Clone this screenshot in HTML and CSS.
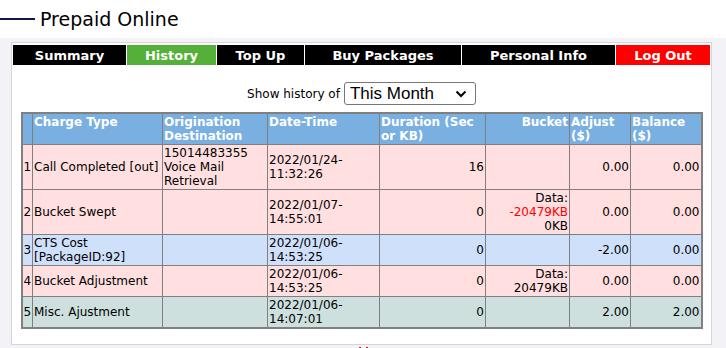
FILE: index.html
```html
<!DOCTYPE html>
<html>
<head>
<meta charset="utf-8">
<link rel="stylesheet" href="styles.css">
</head>
<body>
<header class="top">
  <span class="top-line"></span>
  <h1 class="title">Prepaid Online</h1>
</header>
<main class="panel">
  <nav class="tabs">
    <a class="tab">Summary</a>
    <a class="tab tab-active">History</a>
    <a class="tab">Top Up</a>
    <a class="tab">Buy Packages</a>
    <a class="tab">Personal Info</a>
    <a class="tab tab-logout">Log Out</a>
  </nav>
  <div class="filter">
    <label class="filter-label">Show history of</label>
    <select class="filter-select"><option>This Month</option></select>
  </div>
  <table class="history">
    <colgroup>
      <col class="c-idx"><col class="c-type"><col class="c-orig"><col class="c-date"><col class="c-dur"><col class="c-bucket"><col class="c-adj"><col class="c-bal">
    </colgroup>
    <thead>
      <tr>
        <th></th>
        <th>Charge Type</th>
        <th>Origination Destination</th>
        <th>Date-Time</th>
        <th>Duration (Sec or KB)</th>
        <th class="r">Bucket</th>
        <th>Adjust ($)</th>
        <th>Balance ($)</th>
      </tr>
    </thead>
    <tbody>
      <tr class="pink">
        <td class="idx">1</td>
        <td>Call Completed [out]</td>
        <td>15014483355 Voice Mail Retrieval</td>
        <td>2022/01/24-<br>11:32:26</td>
        <td class="r">16</td>
        <td class="r"></td>
        <td class="r">0.00</td>
        <td class="r">0.00</td>
      </tr>
      <tr class="pink">
        <td class="idx">2</td>
        <td>Bucket Swept</td>
        <td></td>
        <td>2022/01/07-<br>14:55:01</td>
        <td class="r">0</td>
        <td class="r">Data:<br><span class="neg">-20479KB</span><br>0KB</td>
        <td class="r">0.00</td>
        <td class="r">0.00</td>
      </tr>
      <tr class="blue">
        <td class="idx">3</td>
        <td>CTS Cost<br>[PackageID:92]</td>
        <td></td>
        <td>2022/01/06-<br>14:53:25</td>
        <td class="r">0</td>
        <td class="r"></td>
        <td class="r">-2.00</td>
        <td class="r">0.00</td>
      </tr>
      <tr class="pink">
        <td class="idx">4</td>
        <td>Bucket Adjustment</td>
        <td></td>
        <td>2022/01/06-<br>14:53:25</td>
        <td class="r">0</td>
        <td class="r">Data:<br>20479KB</td>
        <td class="r">0.00</td>
        <td class="r">0.00</td>
      </tr>
      <tr class="green">
        <td class="idx">5</td>
        <td>Misc. Ajustment</td>
        <td></td>
        <td>2022/01/06-<br>14:07:01</td>
        <td class="r">0</td>
        <td class="r"></td>
        <td class="r">2.00</td>
        <td class="r">2.00</td>
      </tr>
    </tbody>
  </table>
</main>
<div class="footer-marks"><span class="mark"></span><span class="mark"></span></div>
</body>
</html>
```
FILE: styles.css
```css
html, body {
  margin: 0;
  padding: 0;
}
body {
  background: #f3f2f7;
  font-family: "DejaVu Sans", Verdana, sans-serif;
  font-size: 12px;
  color: #000;
  width: 726px;
  height: 348px;
  overflow: hidden;
}
.top {
  background: #fff;
  height: 38px;
  display: flex;
  align-items: center;
}
.top-line {
  display: block;
  width: 35px;
  height: 2px;
  background: #14144f;
  margin-right: 5px;
  margin-top: 0;
}
.title {
  margin: 0;
  font-weight: normal;
  font-size: 19px;
  color: #000;
  line-height: 22px;
}
.panel {
  margin: 4px 0 0 11px;
  width: 699px;
  background: #fff;
  border: 1px solid #d6d6da;
  padding: 2px 0 15px;
}
.tabs {
  display: grid;
  grid-template-columns: 113px 89px 87px 156px 153px 94px;
  column-gap: 1px;
  margin: 0 1px;
  height: 20px;
}
.tab {
  background: #000;
  color: #fff;
  font-weight: bold;
  font-size: 13px;
  display: flex;
  align-items: center;
  justify-content: center;
}
.tab-active {
  background: #55b03a;
}
.tab-logout {
  background: #ff0000;
}
.filter {
  display: flex;
  justify-content: center;
  align-items: center;
  gap: 4px;
  margin-top: 17px;
}
.filter-label {
  font-size: 12px;
}
.filter-select {
  appearance: none;
  -webkit-appearance: none;
  width: 132px;
  height: 23px;
  border: 1px solid #767676;
  border-radius: 3px;
  background: #fff url("data:image/svg+xml;utf8,<svg xmlns='http://www.w3.org/2000/svg' width='12' height='8' viewBox='0 0 12 8'><path d='M1.5 1.5 L6 6 L10.5 1.5' fill='none' stroke='black' stroke-width='2'/></svg>") no-repeat right 8px center;
  font-family: "Liberation Sans", Arial, sans-serif;
  font-size: 17px;
  color: #000;
  padding: 0 0 0 5px;
  margin: 0;
}
.history {
  margin: 7px auto 0;
  width: 680px;
  border-collapse: collapse;
  border: 2px solid #808080;
  table-layout: fixed;
}
.c-idx { width: 11px; }
.c-type { width: 130px; }
.c-orig { width: 105px; }
.c-date { width: 112px; }
.c-dur { width: 106px; }
.c-bucket { width: 84px; }
.c-adj { width: 61px; }
.c-bal { width: 71px; }
.history th, .history td {
  border: 1px solid #808080;
  padding: 1px 1px;
  line-height: 14px;
  font-size: 12px;
}
.history th {
  background: #7aafe2;
  color: #fff;
  font-weight: bold;
  text-align: left;
  vertical-align: top;
}
.history td {
  vertical-align: middle;
  text-align: left;
}
.history .r {
  text-align: right;
}
.history td.idx {
  padding: 0;
  text-align: center;
}
.pink td { background: #ffdfdf; }
.blue td { background: #cfe0fb; }
.green td { background: #cde0de; }
.neg { color: #ff0000; }
.footer-marks {
  display: flex;
  justify-content: center;
  gap: 5px;
  margin-top: 2px;
}
.mark {
  display: block;
  width: 2px;
  height: 4px;
  background: #ff0000;
}
```
